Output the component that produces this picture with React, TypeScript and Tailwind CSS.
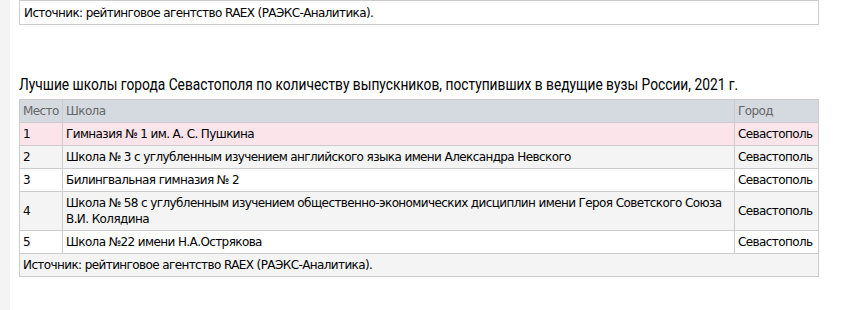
const rows = [
  { place: "1", school: "Гимназия № 1 им. А. С. Пушкина", city: "Севастополь" },
  {
    place: "2",
    school: "Школа № 3 с углубленным изучением английского языка имени Александра Невского",
    city: "Севастополь",
  },
  { place: "3", school: "Билингвальная гимназия № 2", city: "Севастополь" },
  {
    place: "4",
    school:
      "Школа № 58 с углубленным изучением общественно-экономических дисциплин имени Героя Советского Союза В.И. Колядина",
    city: "Севастополь",
  },
  { place: "5", school: "Школа №22 имени Н.А.Острякова", city: "Севастополь" },
];

const rowBg = ["bg-[#fbe4ea]", "bg-[#f4f4f4]", "bg-white", "bg-[#f4f4f4]", "bg-white"];

export default function App() {
  return (
    <div className="flex min-h-[310px] overflow-hidden bg-white font-['DejaVu_Sans',sans-serif] text-[12px] leading-[16px] tracking-[-0.6px] text-black">
      <div className="w-[10px] shrink-0 bg-[#f3f4f3]" />
      <div className="w-[800px] shrink-0 ml-[9px]">
        <table className="w-full border-collapse">
          <tbody>
            <tr>
              <td className="h-[24px] border border-[#cccccc] bg-white px-[4px] py-[3px]">
                Источник: рейтинговое агентство RAEX (РАЭКС-Аналитика).
              </td>
            </tr>
          </tbody>
        </table>

        <h2 className="mt-[48px] mb-[3px] overflow-hidden whitespace-nowrap font-['Roboto',sans-serif] text-[17px] leading-[23px] tracking-normal text-black">
          <span className="inline-block origin-left scale-x-[0.81]">
            Лучшие школы города Севастополя по количеству выпускников, поступивших в ведущие вузы России, 2021 г.
          </span>
        </h2>

        <table className="w-full table-fixed border-collapse">
          <thead>
            <tr className="bg-[#d5dae0] text-[#666666]">
              <th className="w-[43px] border border-[#cccccc] px-[3px] py-[3px] text-left font-normal">Место</th>
              <th className="border border-[#cccccc] px-[3px] py-[3px] text-left font-normal">Школа</th>
              <th className="w-[84px] border border-[#cccccc] px-[3px] py-[3px] text-left font-normal">Город</th>
            </tr>
          </thead>
          <tbody>
            {rows.map((r, i) => (
              <tr key={r.place} className={rowBg[i]}>
                <td className="border border-[#cccccc] px-[3px] py-[3px] align-middle">{r.place}</td>
                <td className="border border-[#cccccc] px-[3px] py-[3px] align-middle">{r.school}</td>
                <td className="border border-[#cccccc] px-[3px] py-[3px] align-middle whitespace-nowrap">{r.city}</td>
              </tr>
            ))}
            <tr className="bg-[#f4f4f4]">
              <td colSpan={3} className="border border-[#cccccc] px-[3px] py-[3px]">
                Источник: рейтинговое агентство RAEX (РАЭКС-Аналитика).
              </td>
            </tr>
          </tbody>
        </table>
      </div>
    </div>
  );
}
